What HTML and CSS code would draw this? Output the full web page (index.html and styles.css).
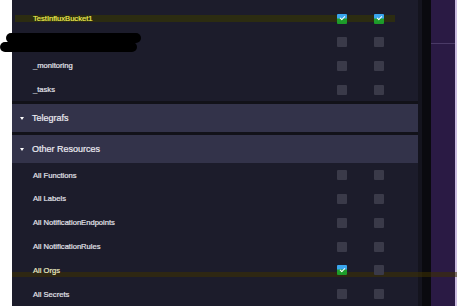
FILE: index.html
```html
<!DOCTYPE html>
<html>
<head>
<meta charset="utf-8">
<link rel="stylesheet" href="styles.css">
</head>
<body>
<div class="page">
  <div class="gutter"></div>
  <div class="panel">
    <div class="rows rows-top">
      <div class="row hl-text"><span class="name">TestInfluxBucket1</span><span class="cb on"></span><span class="cb on"></span></div>
      <div class="row"><span class="name"></span><span class="cb"></span><span class="cb"></span></div>
      <div class="row"><span class="name">_monitoring</span><span class="cb"></span><span class="cb"></span></div>
      <div class="row"><span class="name">_tasks</span><span class="cb"></span><span class="cb"></span></div>
    </div>
    <div class="sep"></div>
    <div class="header"><span class="caret"></span><span>Telegrafs</span></div>
    <div class="sep"></div>
    <div class="header"><span class="caret"></span><span>Other Resources</span></div>
    <div class="rows rows-bottom">
      <div class="row"><span class="name">All Functions</span><span class="cb"></span><span class="cb"></span></div>
      <div class="row"><span class="name">All Labels</span><span class="cb"></span><span class="cb"></span></div>
      <div class="row"><span class="name">All NotificationEndpoints</span><span class="cb"></span><span class="cb"></span></div>
      <div class="row"><span class="name">All NotificationRules</span><span class="cb"></span><span class="cb"></span></div>
      <div class="row hl-text-soft"><span class="name">All Orgs</span><span class="cb on"></span><span class="cb"></span></div>
      <div class="row"><span class="name">All Secrets</span><span class="cb"></span><span class="cb"></span></div>
    </div>
  </div>
  <div class="strip-a"></div>
  <div class="strip-b"></div>
  <div class="purple"><div class="pline"></div></div>
  <div class="edge"></div>
  <div class="rest"></div>

  <div class="band band-1"></div>
  <div class="band band-2"></div>
  <div class="redact redact-1"></div>
  <div class="redact redact-2"></div>
</div>
</body>
</html>
```

FILE: styles.css
```css
html, body {
  margin: 0;
  padding: 0;
  background: #ffffff;
}

.page {
  position: relative;
  display: flex;
  width: 474px;
  height: 306px;
  overflow: hidden;
  font-family: "Liberation Sans", Arial, sans-serif;
}

.gutter {
  width: 12px;
  flex: none;
  background: #ffffff;
}

.panel {
  width: 406px;
  flex: none;
  background: #1c1c2b;
  display: flex;
  flex-direction: column;
}

.rows {
  position: relative;
  z-index: 2;
}

.rows-top {
  padding-top: 7px;
}

.row {
  display: grid;
  grid-template-columns: 1fr 10px 10px;
  column-gap: 27px;
  align-items: center;
  height: 23.6px;
  padding-left: 21px;
  padding-right: 34px;
}

.rows-bottom .row {
  height: 23.8px;
}

.name {
  font-size: 7.6px;
  color: #e4e4ec;
  white-space: nowrap;
  -webkit-text-stroke: 0.2px #e4e4ec;
}

.hl-text .name {
  color: #ecec52;
  -webkit-text-stroke: 0.2px #ecec52;
}

.hl-text-soft .name {
  color: #ecebc0;
  -webkit-text-stroke: 0.2px #ecebc0;
}

.cb {
  width: 10px;
  height: 10px;
  border-radius: 1px;
  background: #3a3a49;
  position: relative;
}

.cb.on {
  background: linear-gradient(#3aa6ee 0%, #3aa6ee 35%, #1f9f2d 55%, #1c9a28 100%);
}

.cb.on::after {
  content: "";
  position: absolute;
  left: 3px;
  top: 2.5px;
  width: 4px;
  height: 2px;
  border-left: 1.2px solid #ffffff;
  border-bottom: 1.2px solid #ffffff;
  transform: rotate(-45deg);
}

.sep {
  height: 3px;
  background: #121219;
}

.header {
  height: 28px;
  background: #33334a;
  display: flex;
  align-items: center;
  padding-left: 8px;
  font-size: 9px;
  color: #ececf2;
  -webkit-text-stroke: 0.2px #ececf2;
}

.caret {
  width: 0;
  height: 0;
  border-left: 2.5px solid transparent;
  border-right: 2.5px solid transparent;
  border-top: 3px solid #ffffff;
  margin-right: 8px;
}

.strip-a {
  width: 4px;
  flex: none;
  background: #14141e;
}

.strip-b {
  width: 9px;
  flex: none;
  background: #0a0a0f;
}

.purple {
  width: 24px;
  flex: none;
  background: #2a1a44;
  display: flex;
  flex-direction: column;
  padding-top: 43px;
  box-sizing: border-box;
}

.pline {
  height: 1px;
  background: #4a3a66;
}

.edge {
  width: 2px;
  flex: none;
  background: #cbbde0;
}

.rest {
  flex: 1;
  background: #ffffff;
}

.band {
  position: absolute;
  z-index: 1;
  pointer-events: none;
}

.band-1 {
  left: 15px;
  top: 15px;
  width: 380px;
  height: 7px;
  background: rgba(55, 55, 0, 0.6);
}

.band-2 {
  left: 12px;
  top: 272px;
  width: 445px;
  height: 5px;
  background: rgba(62, 50, 0, 0.55);
}

.redact {
  position: absolute;
  z-index: 3;
  background: #000000;
  border-radius: 6px;
}

.redact-1 {
  left: 6px;
  top: 33px;
  width: 135px;
  height: 10px;
}

.redact-2 {
  left: 0px;
  top: 42px;
  width: 137px;
  height: 10px;
  border-radius: 5px;
}
```
